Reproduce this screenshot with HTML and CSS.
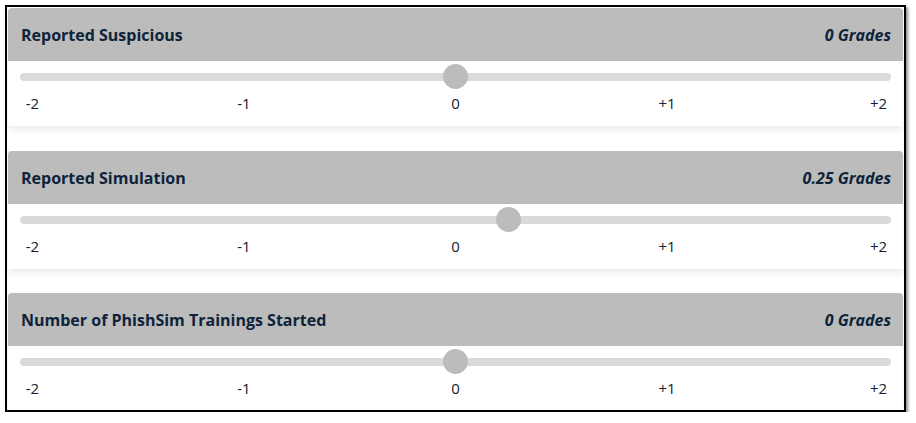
FILE: index.html
```html
<!DOCTYPE html>
<html lang="en">
  <head>
    <meta charset="UTF-8" />
    <meta name="viewport" content="width=device-width, initial-scale=1.0" />
    <title>Grade Weights</title>
    <link rel="stylesheet" href="styles.css">
  </head>
  <body>
    <div class="frame">
      <!-- Reported Suspicious -->
      <div class="card">
        <div class="card-header">
          <span class="title">Reported Suspicious</span>
          <span class="grades">0 Grades</span>
        </div>
        <div class="card-body">
          <input type="range" class="slider" min="-2" max="2" step="0.25" value="0" />
          <div class="ticks">
            <span>-2</span>
            <span>-1</span>
            <span>0</span>
            <span>+1</span>
            <span>+2</span>
          </div>
        </div>
      </div>

      <!-- Reported Simulation -->
      <div class="card">
        <div class="card-header">
          <span class="title">Reported Simulation</span>
          <span class="grades">0.25 Grades</span>
        </div>
        <div class="card-body">
          <input type="range" class="slider" min="-2" max="2" step="0.25" value="0.25" />
          <div class="ticks">
            <span>-2</span>
            <span>-1</span>
            <span>0</span>
            <span>+1</span>
            <span>+2</span>
          </div>
        </div>
      </div>

      <!-- PhishSim trainings -->
      <div class="card">
        <div class="card-header">
          <span class="title">Number of PhishSim Trainings Started</span>
          <span class="grades">0 Grades</span>
        </div>
        <div class="card-body">
          <input type="range" class="slider" min="-2" max="2" step="0.25" value="0" />
          <div class="ticks">
            <span>-2</span>
            <span>-1</span>
            <span>0</span>
            <span>+1</span>
            <span>+2</span>
          </div>
        </div>
      </div>
    </div>
  </body>
</html>
```

FILE: styles.css
```css
/* base */
body {
  font-family: "Open Sans", "Liberation Sans", sans-serif;
  margin: 5px;
  padding: 0;
  background-color: #ffffff;
  color: #16202e;
}

/* outer box */
.frame {
  width: 901px;
  height: 407px;
  box-sizing: border-box;
  border: 2px solid #000;
  padding: 1px;
  background-color: #fff;
  box-shadow: 2px 2px 3px rgba(0, 0, 0, 0.45);
  overflow: hidden;
}

/* cards */
.card {
  margin-bottom: 25px;
  box-shadow: 0 4px 6px rgba(0, 0, 0, 0.07);
}

.card:nth-child(2) {
  margin-bottom: 24px;
}

.card-header {
  display: flex;
  align-items: center;
  justify-content: space-between;
  height: 53px;
  padding: 0 12px 0 13px;
  box-sizing: border-box;
  background-color: #bbbcbb;
  border-radius: 4px 4px 0 0;
  color: #0e2339;
  font-size: 16px;
  font-weight: 700;
}

.grades {
  font-style: italic;
}

.card-body {
  height: 65px;
  box-sizing: border-box;
  padding: 3px 12px 0;
  background-color: #fff;
}

/* slider */
.slider {
  -webkit-appearance: none;
  appearance: none;
  display: block;
  width: 100%;
  height: 25px;
  margin: 0;
  background: transparent;
  outline: none;
}

.slider::-webkit-slider-runnable-track {
  height: 8px;
  background-color: #d9dadb;
  border-radius: 4px;
}

.slider::-webkit-slider-thumb {
  -webkit-appearance: none;
  width: 25px;
  height: 25px;
  margin-top: -8.5px;
  border: none;
  border-radius: 50%;
  background-color: #bbbcbb;
}

/* labels under the slider */
.ticks {
  display: flex;
  justify-content: space-between;
  padding: 0 12.5px;
  margin-top: 4px;
  font-size: 15px;
  line-height: 20px;
}

.ticks span {
  width: 0;
  display: flex;
  justify-content: center;
  white-space: nowrap;
}
```
